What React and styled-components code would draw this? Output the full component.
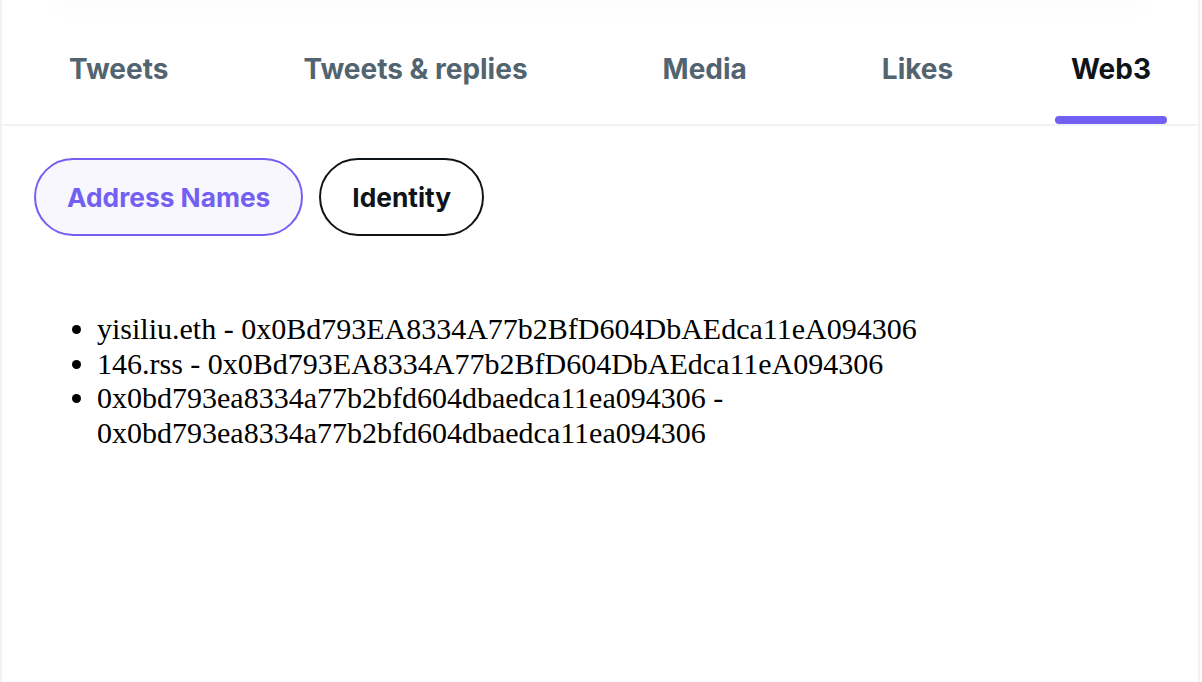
import React, { useState } from "react";
import styled, { createGlobalStyle } from "styled-components";

const GlobalStyle = createGlobalStyle`
  body {
    margin: 0;
    background: #ffffff;
    font-family: "Liberation Serif", "Times New Roman", serif;
  }
`;

const Page = styled.div`
  width: 1196px;
  height: 682px;
  border-left: 2px solid #eff3f4;
  border-right: 2px solid #eff3f4;
  background: #ffffff;
  overflow: hidden;
`;

const TopShadow = styled.div`
  height: 0;
  margin: 0 60px;
  box-shadow: 0 0 26px 8px rgba(0, 0, 0, 0.022);
`;

const TabBar = styled.nav`
  display: flex;
  height: 110px;
  padding: 14px 31px 0 51px;
  border-bottom: 2px solid #eff3f4;
`;

const Tab = styled.div`
  position: relative;
  flex-shrink: 0;
  display: flex;
  align-items: center;
  justify-content: center;
  padding: 0 16px;
  margin-right: 103px;
  white-space: nowrap;
  font-family: Inter, "Liberation Sans", sans-serif;
  font-size: 28px;
  font-weight: 700;
  color: ${(p) => (p.$active ? "#0f1419" : "#536471")};
  cursor: pointer;

  &:nth-last-child(2) {
    margin-right: 0;
  }

  &:last-child {
    margin: 0 0 0 auto;
  }
`;

const Indicator = styled.span`
  position: absolute;
  left: 0;
  right: 0;
  bottom: 0;
  height: 8px;
  border-radius: 4px;
  background: #7360f2;
`;

const PillRow = styled.div`
  display: flex;
  gap: 16px;
  padding: 32px 0 0 32px;
`;

const Pill = styled.button`
  height: 78px;
  padding: 0 31px;
  border-radius: 39px;
  border: 2px solid ${(p) => (p.$active ? "#7360f2" : "#0f1419")};
  background: ${(p) => (p.$active ? "#f8f7fe" : "#ffffff")};
  color: ${(p) => (p.$active ? "#7360f2" : "#0f1419")};
  font-family: Inter, "Liberation Sans", sans-serif;
  font-size: 26.3px;
  font-weight: 700;
  cursor: pointer;
`;

const AddressList = styled.ul`
  margin: 76px 0 0;
  padding-left: 95px;
  font-size: 30px;
  line-height: 34.5px;
  color: #000000;
`;

const tabs = ["Tweets", "Tweets & replies", "Media", "Likes", "Web3"];

const addresses = [
  "yisiliu.eth - 0x0Bd793EA8334A77b2BfD604DbAEdca11eA094306",
  "146.rss - 0x0Bd793EA8334A77b2BfD604DbAEdca11eA094306",
  "0x0bd793ea8334a77b2bfd604dbaedca11ea094306 - 0x0bd793ea8334a77b2bfd604dbaedca11ea094306",
];

export default function App() {
  const [tab, setTab] = useState("Web3");
  const [pill, setPill] = useState("names");

  return (
    <Page>
      <GlobalStyle />
      <TopShadow />
      <TabBar>
        {tabs.map((t) => (
          <Tab key={t} $active={t === tab} onClick={() => setTab(t)}>
            {t}
            {t === tab && <Indicator />}
          </Tab>
        ))}
      </TabBar>
      <PillRow>
        <Pill $active={pill === "names"} onClick={() => setPill("names")}>
          Address Names
        </Pill>
        <Pill $active={pill === "identity"} onClick={() => setPill("identity")}>
          Identity
        </Pill>
      </PillRow>
      <AddressList>
        {addresses.map((a) => (
          <li key={a}>{a}</li>
        ))}
      </AddressList>
    </Page>
  );
}
